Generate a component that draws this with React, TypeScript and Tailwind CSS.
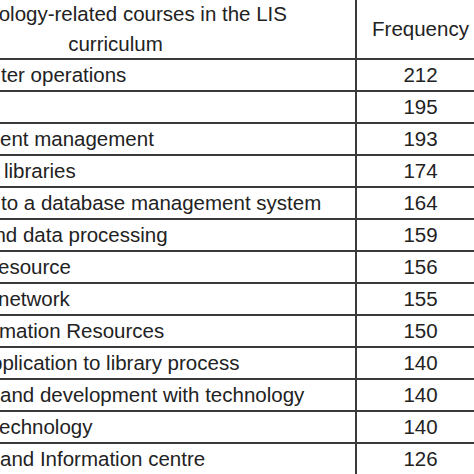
import React from "react";

const rows: { text: string; offset: number; freq: string }[] = [
  { text: "ter operations", offset: 1, freq: "212" },
  { text: "", offset: 0, freq: "195" },
  { text: "ent management", offset: 0, freq: "193" },
  { text: "libraries", offset: 4, freq: "174" },
  { text: "to a database management system", offset: 1, freq: "164" },
  { text: "and data processing", offset: -17, freq: "159" },
  { text: "esource", offset: -2, freq: "156" },
  { text: "network", offset: -2, freq: "155" },
  { text: "mation Resources", offset: -1, freq: "150" },
  { text: "pplication to library process", offset: -9, freq: "140" },
  { text: "and development with technology", offset: 0, freq: "140" },
  { text: "echnology", offset: -1, freq: "140" },
  { text: "and Information centre", offset: 0, freq: "126" },
];

export default function App() {
  return (
    <div
      className="w-[474px] h-[474px] overflow-hidden bg-white text-[#222222] text-[20.5px]"
      style={{ fontFamily: '"Liberation Sans", Arial, sans-serif' }}
    >
      <div className="ml-[-124px] w-[608px] flex flex-col">
        <div className="flex h-[60px] border-b-2 border-[#3a3a3a]">
          <div className="w-[481px] border-r-2 border-[#3a3a3a] flex items-center justify-center text-center leading-[30px]">
            <div>
              Technology-related courses in the LIS
              <br />
              curriculum
            </div>
          </div>
          <div className="w-[127px] flex items-center justify-center leading-[30px]">
            Frequency
          </div>
        </div>
        {rows.map((r, i) => (
          <div key={i} className="flex h-[32px] border-b-2 border-[#3a3a3a]">
            <div className="w-[481px] border-r-2 border-[#3a3a3a] flex items-center leading-[30px] whitespace-nowrap">
              <span className="pl-[124px]" style={{ marginLeft: r.offset }}>
                {r.text}
              </span>
            </div>
            <div className="w-[127px] flex items-center justify-center leading-[30px]">
              {r.freq}
            </div>
          </div>
        ))}
      </div>
    </div>
  );
}
